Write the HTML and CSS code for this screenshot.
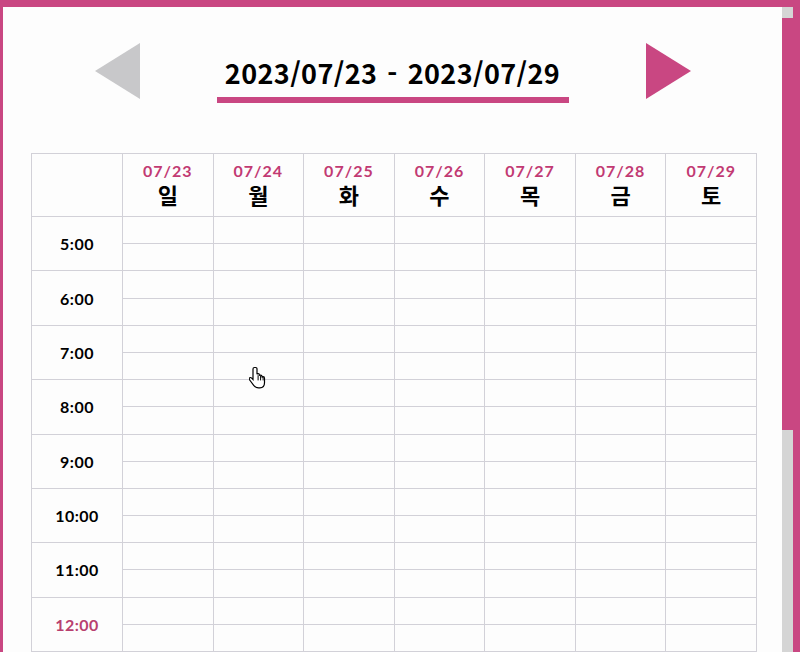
FILE: index.html
```html
<!DOCTYPE html>
<html lang="ko">
<head>
    <meta charset="UTF-8">
    <meta name="viewport" content="width=device-width, initial-scale=1.0">
    <title>주간 시간표</title>
    <link rel="stylesheet" href="styles.css">
</head>
<body>
    <div class="frame">
        <div class="page">
            <div class="week-nav">
                <button class="nav-btn prev" aria-label="이전 주">
                    <svg width="45" height="56" viewBox="0 0 45 56"><polygon points="45,0 45,56 0,28"/></svg>
                </button>
                <div class="week-title">2023/07/23 - 2023/07/29</div>
                <button class="nav-btn next" aria-label="다음 주">
                    <svg width="45" height="56" viewBox="0 0 45 56"><polygon points="0,0 0,56 45,28"/></svg>
                </button>
            </div>

            <div class="table-wrap">
                <table class="week">
                    <colgroup><col class="time-col"><col span="7"></colgroup>
                    <thead>
                        <tr>
                            <th></th>
                            <th><span class="date">07/23</span><span class="day">일</span></th>
                            <th><span class="date">07/24</span><span class="day">월</span></th>
                            <th><span class="date">07/25</span><span class="day">화</span></th>
                            <th><span class="date">07/26</span><span class="day">수</span></th>
                            <th><span class="date">07/27</span><span class="day">목</span></th>
                            <th><span class="date">07/28</span><span class="day">금</span></th>
                            <th><span class="date">07/29</span><span class="day">토</span></th>
                        </tr>
                    </thead>
                    <tbody>
                        <tr><th rowspan="2" class="time">5:00</th><td></td><td></td><td></td><td></td><td></td><td></td><td></td></tr>
                        <tr><td></td><td></td><td></td><td></td><td></td><td></td><td></td></tr>
                        <tr><th rowspan="2" class="time">6:00</th><td></td><td></td><td></td><td></td><td></td><td></td><td></td></tr>
                        <tr><td></td><td></td><td></td><td></td><td></td><td></td><td></td></tr>
                        <tr><th rowspan="2" class="time">7:00</th><td></td><td></td><td></td><td></td><td></td><td></td><td></td></tr>
                        <tr><td></td><td></td><td></td><td></td><td></td><td></td><td></td></tr>
                        <tr><th rowspan="2" class="time">8:00</th><td></td><td></td><td></td><td></td><td></td><td></td><td></td></tr>
                        <tr><td></td><td></td><td></td><td></td><td></td><td></td><td></td></tr>
                        <tr><th rowspan="2" class="time">9:00</th><td></td><td></td><td></td><td></td><td></td><td></td><td></td></tr>
                        <tr><td></td><td></td><td></td><td></td><td></td><td></td><td></td></tr>
                        <tr><th rowspan="2" class="time">10:00</th><td></td><td></td><td></td><td></td><td></td><td></td><td></td></tr>
                        <tr><td></td><td></td><td></td><td></td><td></td><td></td><td></td></tr>
                        <tr><th rowspan="2" class="time">11:00</th><td></td><td></td><td></td><td></td><td></td><td></td><td></td></tr>
                        <tr><td></td><td></td><td></td><td></td><td></td><td></td><td></td></tr>
                        <tr><th rowspan="2" class="time noon">12:00</th><td></td><td></td><td></td><td></td><td></td><td></td><td></td></tr>
                        <tr><td></td><td></td><td></td><td></td><td></td><td></td><td></td></tr>
                        <tr><th rowspan="2" class="time">13:00</th><td></td><td></td><td></td><td></td><td></td><td></td><td></td></tr>
                        <tr><td></td><td></td><td></td><td></td><td></td><td></td><td></td></tr>
                        <tr><th rowspan="2" class="time">14:00</th><td></td><td></td><td></td><td></td><td></td><td></td><td></td></tr>
                        <tr><td></td><td></td><td></td><td></td><td></td><td></td><td></td></tr>
                    </tbody>
                </table>
            </div>
        </div>

        <!-- scrollbar drawn by hand: the capture browser hides native ones -->
        <div class="scrollbar">
            <div class="scroll-btn"></div>
            <div class="scroll-thumb"></div>
        </div>
    </div>

    <!-- mouse pointer from the capture -->
    <svg class="pointer" width="18" height="24" viewBox="0 0 18 24">
        <path d="M5.5 1.5c-1 0-1.5.7-1.5 1.6v10.4l-1.3-1.4c-.8-.8-1.8-.8-2.3 0-.4.6-.2 1.3.3 1.9l4 5.3c1.2 1.6 2.6 2.5 4.8 2.5h1.4c3 0 4.6-2 4.6-5v-4.6c0-.9-.6-1.5-1.4-1.5-.5 0-.9.3-1.1.7v-.8c0-.9-.6-1.5-1.4-1.5-.5 0-.9.3-1.1.7v-.6c0-.9-.6-1.5-1.4-1.5-.5 0-.9.2-1.1.6V3.1c0-.9-.5-1.6-1.5-1.6z" fill="#fff" stroke="#000" stroke-width="1.2"/>
        <path d="M9.1 9.2v5.2M11.6 10v4.4M14.1 11v3.4" stroke="#000" stroke-width="1"/>
    </svg>
</body>
</html>
```

FILE: styles.css
```css
html, body {
    margin: 0;
    overflow: hidden;
}
body {
    background: #fdfdfd;
    font-family: "Noto Sans CJK KR", "Noto Sans", sans-serif;
    position: relative;
}
.frame {
    display: flex;
    height: 653px;
    border: solid #c94782;
    border-width: 7px 7px 7px 3px;
    background: #fdfdfd;
}
.page {
    flex: 1;
    overflow: hidden;
}
.scrollbar {
    width: 11px;
    display: flex;
    flex-direction: column;
    background: #d5d5d5;
}
.scroll-btn {
    height: 11px;
}
.scroll-thumb {
    height: 412px;
    background: #c94782;
}

/* week navigation */
.week-nav {
    display: flex;
    justify-content: center;
    align-items: flex-start;
    gap: 77px;
    padding-top: 36px;
}
.nav-btn {
    border: none;
    background: none;
    padding: 0;
    cursor: pointer;
    display: block;
}
.nav-btn svg {
    display: block;
}
.prev polygon {
    fill: #c8c8ca;
}
.next polygon {
    fill: #c94782;
}
.week-title {
    width: 352px;
    margin-top: 12px;
    padding-bottom: 6px;
    border-bottom: 6px solid #c94782;
    text-align: center;
    font-size: 27px;
    font-weight: 700;
    letter-spacing: 0.4px;
    word-spacing: 2px;
    line-height: 36px;
    color: #000;
}

/* timetable */
.table-wrap {
    padding: 50px 0 28px 28px;
}
.week {
    width: 726px;
    table-layout: fixed;
    border-collapse: collapse;
}
.time-col {
    width: 91px;
}
.week th,
.week td {
    border: 1px solid #d2d1d8;
    padding: 0;
}
.week thead th {
    height: 62px;
    text-align: center;
    vertical-align: middle;
}
.date {
    display: block;
    font-family: Lato, "Noto Sans", sans-serif;
    font-size: 16px;
    font-weight: 700;
    letter-spacing: 1px;
    line-height: 18px;
    color: #c23a73;
}
.day {
    display: block;
    font-size: 22px;
    font-weight: 700;
    line-height: 28px;
    color: #000;
}
.week tbody tr {
    height: 27.2px;
}
.time {
    font-family: Lato, "Noto Sans", sans-serif;
    font-size: 16px;
    font-weight: 700;
    letter-spacing: 0.5px;
    color: #000;
    text-align: center;
}
.time.noon {
    color: #b8406f;
}

.pointer {
    position: absolute;
    left: 249px;
    top: 366px;
}
```
